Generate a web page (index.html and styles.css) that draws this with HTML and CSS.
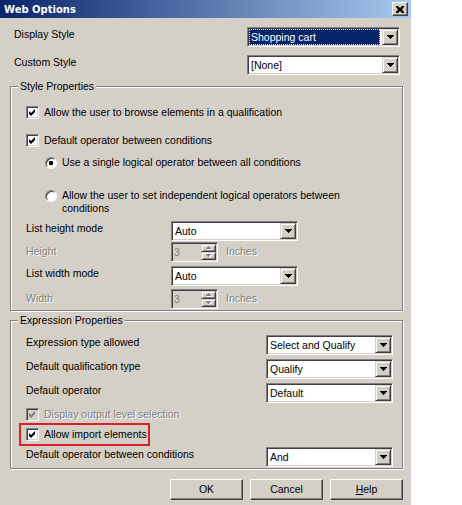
FILE: index.html
```html
<!DOCTYPE html>
<html>

<head>
    <meta charset="utf-8" />
    <title>Web Options</title>
    <link rel="stylesheet" href="styles.css">
</head>

<body>
    <div class="dialog">
        <div class="titlebar">
            <span class="title">Web Options</span>
            <span class="close">
                <svg width="8" height="7" viewBox="0 0 8 7"><path d="M0 0h2l2 2 2-2h2v1l-2 2.5 2 2.5v1h-2l-2-2-2 2h-2v-1l2-2.5-2-2.5z" fill="#000"/></svg>
            </span>
        </div>

        <div class="top-row">
            <span class="label top-label">Display Style</span>
            <div class="combo wide focused">
                <span class="value">Shopping cart</span>
                <span class="drop"><svg width="7" height="4" viewBox="0 0 7 4"><path d="M0 0h7v1h-1v1h-1v1h-1v1h-1v-1h-1v-1h-1v-1h-1z"/></svg></span>
            </div>
        </div>
        <div class="top-row second">
            <span class="label top-label">Custom Style</span>
            <div class="combo wide">
                <span class="value">[None]</span>
                <span class="drop"><svg width="7" height="4" viewBox="0 0 7 4"><path d="M0 0h7v1h-1v1h-1v1h-1v1h-1v-1h-1v-1h-1v-1h-1z"/></svg></span>
            </div>
        </div>

        <fieldset class="group style-group">
            <legend>Style Properties</legend>

            <div class="check-row first">
                <span class="box"><svg width="11" height="11" viewBox="0 0 11 11"><path d="M2 4l2 2 4-4v3l-4 4-2-2z"/></svg></span>
                <span>Allow the user to browse elements in a qualification</span>
            </div>
            <div class="check-row cb2">
                <span class="box"><svg width="11" height="11" viewBox="0 0 11 11"><path d="M2 4l2 2 4-4v3l-4 4-2-2z"/></svg></span>
                <span>Default operator between conditions</span>
            </div>
            <div class="radio-row r1">
                <span class="radio on"></span>
                <span>Use a single logical operator between all conditions</span>
            </div>
            <div class="radio-row r2">
                <span class="radio"></span>
                <span>Allow the user to set independent logical operators between<br>conditions</span>
            </div>

            <div class="field-row list-height">
                <span class="label short">List height mode</span>
                <div class="combo">
                    <span class="value">Auto</span>
                    <span class="drop"><svg width="7" height="4" viewBox="0 0 7 4"><path d="M0 0h7v1h-1v1h-1v1h-1v1h-1v-1h-1v-1h-1v-1h-1z"/></svg></span>
                </div>
            </div>
            <div class="field-row spin-row sp1">
                <span class="label short disabled">Height</span>
                <div class="spin">
                    <span class="spin-value">3</span>
                    <span class="arrows">
                        <span class="arrow-btn"><svg width="6" height="4" viewBox="0 0 6 4"><path d="M3 1h1v1h1v1h1v1h-5v-1h1v-1h1z" fill="#fff"/><path d="M2 0h1v1h1v1h1v1h-5v-1h1v-1h1z" fill="#808080"/></svg></span>
                        <span class="arrow-btn"><svg width="6" height="4" viewBox="0 0 6 4"><path d="M1 1h5v1h-1v1h-1v1h-1v-1h-1v-1h-1z" fill="#fff"/><path d="M0 0h5v1h-1v1h-1v1h-1v-1h-1v-1h-1z" fill="#808080"/></svg></span>
                    </span>
                </div>
                <span class="unit disabled">Inches</span>
            </div>
            <div class="field-row list-width">
                <span class="label short">List width mode</span>
                <div class="combo">
                    <span class="value">Auto</span>
                    <span class="drop"><svg width="7" height="4" viewBox="0 0 7 4"><path d="M0 0h7v1h-1v1h-1v1h-1v1h-1v-1h-1v-1h-1v-1h-1z"/></svg></span>
                </div>
            </div>
            <div class="field-row spin-row sp2">
                <span class="label short disabled">Width</span>
                <div class="spin">
                    <span class="spin-value">3</span>
                    <span class="arrows">
                        <span class="arrow-btn"><svg width="6" height="4" viewBox="0 0 6 4"><path d="M3 1h1v1h1v1h1v1h-5v-1h1v-1h1z" fill="#fff"/><path d="M2 0h1v1h1v1h1v1h-5v-1h1v-1h1z" fill="#808080"/></svg></span>
                        <span class="arrow-btn"><svg width="6" height="4" viewBox="0 0 6 4"><path d="M1 1h5v1h-1v1h-1v1h-1v-1h-1v-1h-1z" fill="#fff"/><path d="M0 0h5v1h-1v1h-1v1h-1v-1h-1v-1h-1z" fill="#808080"/></svg></span>
                    </span>
                </div>
                <span class="unit disabled">Inches</span>
            </div>
        </fieldset>

        <fieldset class="group expr-group">
            <legend>Expression Properties</legend>

            <div class="field-row e1">
                <span class="label long">Expression type allowed</span>
                <div class="combo">
                    <span class="value">Select and Qualify</span>
                    <span class="drop"><svg width="7" height="4" viewBox="0 0 7 4"><path d="M0 0h7v1h-1v1h-1v1h-1v1h-1v-1h-1v-1h-1v-1h-1z"/></svg></span>
                </div>
            </div>
            <div class="field-row e2">
                <span class="label long">Default qualification type</span>
                <div class="combo">
                    <span class="value">Qualify</span>
                    <span class="drop"><svg width="7" height="4" viewBox="0 0 7 4"><path d="M0 0h7v1h-1v1h-1v1h-1v1h-1v-1h-1v-1h-1v-1h-1z"/></svg></span>
                </div>
            </div>
            <div class="field-row e2">
                <span class="label long">Default operator</span>
                <div class="combo">
                    <span class="value">Default</span>
                    <span class="drop"><svg width="7" height="4" viewBox="0 0 7 4"><path d="M0 0h7v1h-1v1h-1v1h-1v1h-1v-1h-1v-1h-1v-1h-1z"/></svg></span>
                </div>
            </div>

            <div class="check-row output-level">
                <span class="box disabled"><svg width="11" height="11" viewBox="0 0 11 11"><path d="M2 4l2 2 4-4v3l-4 4-2-2z"/></svg></span>
                <span class="disabled">Display output level selection</span>
            </div>
            <div class="check-row import-row">
                <div class="highlight">
                    <span class="box"><svg width="11" height="11" viewBox="0 0 11 11"><path d="M2 4l2 2 4-4v3l-4 4-2-2z"/></svg></span>
                    <span>Allow import elements</span>
                </div>
            </div>

            <div class="field-row e-last">
                <span class="label long">Default operator between conditions</span>
                <div class="combo">
                    <span class="value">And</span>
                    <span class="drop"><svg width="7" height="4" viewBox="0 0 7 4"><path d="M0 0h7v1h-1v1h-1v1h-1v1h-1v-1h-1v-1h-1v-1h-1z"/></svg></span>
                </div>
            </div>
        </fieldset>

        <div class="buttons">
            <span class="button">OK</span>
            <span class="button">Cancel</span>
            <span class="button"><u>H</u>elp</span>
        </div>
    </div>
</body>

</html>
```

FILE: styles.css
```css
/* page */

body {
    margin: 0;
    background: #fff;
    font-family: "Liberation Sans", Arial, sans-serif;
    font-size: 10.5px;
    line-height: 13px;
    color: #000;
}

.dialog {
    width: 411px;
    height: 505px;
    background: #d4d0c8;
    overflow: hidden;
}

/* title bar */

.titlebar {
    height: 18px;
    display: flex;
    align-items: center;
    justify-content: space-between;
    padding: 0 3px 0 4px;
    background: linear-gradient(to right, #0a246a, #a6caf0);
}

.title {
    color: #fff;
    font-family: "DejaVu Sans", Verdana, sans-serif;
    font-weight: bold;
    font-size: 10px;
}

.close {
    width: 16px;
    height: 14px;
    box-sizing: border-box;
    display: flex;
    align-items: center;
    justify-content: center;
    background: #d4d0c8;
    border: 1px solid;
    border-color: #fff #404040 #404040 #fff;
    box-shadow: inset -1px -1px 0 #808080;
}

/* rows */

.top-row {
    display: flex;
    align-items: flex-start;
    margin-top: 9px;
    padding-left: 14px;
}

.top-row.second {
    margin-top: 8px;
}

.label {
    padding-top: 1px;
    flex: none;
}

.top-label { width: 233px; }
.short { width: 145px; }
.long { width: 240px; }

.disabled {
    color: #808080;
    text-shadow: 1px 1px 0 #fff;
}

/* combo box */

.combo {
    width: 127px;
    height: 20px;
    box-sizing: border-box;
    flex: none;
    display: flex;
    padding: 1px;
    background: #fff;
    border: 1px solid;
    border-color: #808080 #fff #fff #808080;
    box-shadow: inset 1px 1px 0 #404040, inset -1px -1px 0 #d4d0c8;
}

.combo.wide {
    width: 153px;
}

.combo .value {
    flex: 1;
    line-height: 16px;
    padding-left: 2px;
    white-space: nowrap;
}

.combo.focused .value {
    background: #0a246a;
    color: #fff;
    margin-right: 2px;
    outline: 1px dotted #f5db95;
    outline-offset: -1px;
}

.drop {
    width: 16px;
    box-sizing: border-box;
    flex: none;
    display: flex;
    align-items: center;
    justify-content: center;
    background: #d4d0c8;
    border: 1px solid;
    border-color: #d4d0c8 #404040 #404040 #d4d0c8;
    box-shadow: inset 1px 1px 0 #fff, inset -1px -1px 0 #808080;
}

.drop svg {
    display: block;
}

/* group boxes */

.group {
    width: 393px;
    box-sizing: border-box;
    margin: 5px 0 0 10px;
    padding: 0 0 1px 15px;
    border: 1px solid #808080;
    box-shadow: 1px 1px 0 #fff, inset 1px 1px 0 #fff;
}

.group legend {
    margin-left: -8px;
    padding: 0 2px;
    background: #d4d0c8;
    line-height: 13px;
}

.expr-group {
    margin-top: 3px;
}

/* checks and radios */

.check-row,
.radio-row {
    display: flex;
    align-items: flex-start;
    gap: 5px;
    white-space: nowrap;
}

.check-row.first { margin-top: 13px; }
.check-row.cb2 { margin-top: 15px; }
.radio-row { padding-left: 19px; }
.radio-row.r1 { margin-top: 9px; }
.radio-row.r2 { margin-top: 20px; }

.box {
    width: 13px;
    height: 13px;
    box-sizing: border-box;
    flex: none;
    background: #fff;
    border: 1px solid;
    border-color: #808080 #fff #fff #808080;
    box-shadow: inset 1px 1px 0 #404040, inset -1px -1px 0 #d4d0c8;
}

.box svg {
    display: block;
    fill: #000;
}

.box.disabled {
    background: #d4d0c8;
}

.box.disabled svg {
    fill: #808080;
}

.radio {
    width: 12px;
    height: 12px;
    box-sizing: border-box;
    flex: none;
    margin-top: 1px;
    border-radius: 50%;
    background: #fff;
    border: 1px solid;
    border-color: #808080 #fff #fff #808080;
    box-shadow: inset 1px 1px 0 #404040;
}

.radio.on {
    background: radial-gradient(circle, #000 0 2px, #fff 2.6px);
}

/* label + control rows */

.field-row {
    display: flex;
    align-items: flex-start;
}

.list-height { margin-top: 6px; }
.sp1 { margin-top: 1px; }
.list-width { margin-top: 4px; }
.sp2 { margin-top: 3px; }

.spin-row .label {
    padding-top: 3px;
}

.spin {
    width: 47px;
    height: 20px;
    box-sizing: border-box;
    flex: none;
    display: flex;
    padding: 1px;
    background: #d4d0c8;
    border: 1px solid;
    border-color: #808080 #fff #fff #808080;
    box-shadow: inset 1px 1px 0 #404040, inset -1px -1px 0 #d4d0c8;
}

.spin-value {
    flex: 1;
    line-height: 16px;
    padding-left: 1px;
    color: #808080;
}

.arrows {
    width: 15px;
    display: flex;
    flex-direction: column;
}

.arrow-btn {
    flex: 1;
    display: flex;
    align-items: center;
    justify-content: center;
    box-sizing: border-box;
    border: 1px solid;
    border-color: #d4d0c8 #404040 #404040 #d4d0c8;
    box-shadow: inset 1px 1px 0 #fff, inset -1px -1px 0 #808080;
}

.arrow-btn svg {
    display: block;
}

.unit {
    margin-left: 8px;
    padding-top: 3px;
}

.e1 { margin-top: 8px; }
.e2 { margin-top: 4px; }
.output-level { margin-top: 5px; }
.import-row { margin-top: 7px; }
.e-last { margin-top: 6px; }

/* red annotation round the import option */

.highlight {
    position: relative;
    display: flex;
    gap: 5px;
}

.highlight::after {
    content: "";
    position: absolute;
    left: -7px;
    top: -5px;
    right: -3px;
    bottom: -5px;
    border: 2px solid #dd1f26;
}

/* push buttons */

.buttons {
    display: flex;
    justify-content: flex-end;
    gap: 7px;
    margin-top: 10px;
    padding-right: 8px;
}

.button {
    width: 73px;
    height: 21px;
    box-sizing: border-box;
    display: flex;
    align-items: center;
    justify-content: center;
    background: #d4d0c8;
    border: 1px solid;
    border-color: #fff #404040 #404040 #fff;
    box-shadow: inset -1px -1px 0 #808080;
}
```
